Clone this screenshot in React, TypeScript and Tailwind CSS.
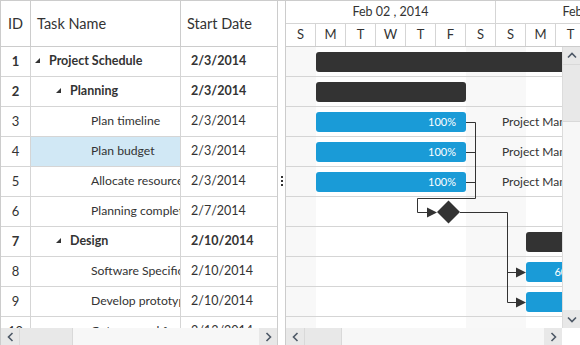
import React from 'react';

type Row = { id: number; name: string; date: string; level: number; parent?: boolean };

const rows: Row[] = [
  { id: 1, name: 'Project Schedule', date: '2/3/2014', level: 0, parent: true },
  { id: 2, name: 'Planning', date: '2/3/2014', level: 1, parent: true },
  { id: 3, name: 'Plan timeline', date: '2/3/2014', level: 2 },
  { id: 4, name: 'Plan budget', date: '2/3/2014', level: 2 },
  { id: 5, name: 'Allocate resources', date: '2/3/2014', level: 2 },
  { id: 6, name: 'Planning complete', date: '2/7/2014', level: 2 },
  { id: 7, name: 'Design', date: '2/10/2014', level: 1, parent: true },
  { id: 8, name: 'Software Specification', date: '2/10/2014', level: 2 },
  { id: 9, name: 'Develop prototype', date: '2/10/2014', level: 2 },
  { id: 10, name: 'Get approval from customer', date: '2/13/2014', level: 2 },
];

const indent = ['pl-[4px]', 'pl-[25px]', 'pl-[46px]'];
const days = ['S', 'M', 'T', 'W', 'T', 'F', 'S', 'S', 'M', 'T'];

// small chevron used by the scrollbar buttons
const Chevron = ({ dir }: { dir: 'l' | 'r' | 'u' | 'd' }) => {
  const pts = { l: '5.5,1 1.5,5 5.5,9', r: '1.5,1 5.5,5 1.5,9', u: '1,5.5 5,1.5 9,5.5', d: '1,1.5 5,5.5 9,1.5' }[dir];
  const horiz = dir === 'l' || dir === 'r';
  return (
    <svg width={horiz ? 7 : 10} height={horiz ? 10 : 7} viewBox={horiz ? '0 0 7 10' : '0 0 10 7'}>
      <polyline points={pts} fill="none" stroke="#4d5866" strokeWidth="1.6" />
    </svg>
  );
};

const Expander = () => (
  <span className="w-[14px] shrink-0 flex items-center">
    <svg width="5" height="5" viewBox="0 0 5 5" className="mt-[-2px]">
      <polygon points="5,0 5,5 0,5" fill="#333" />
    </svg>
  </span>
);

const HScroll = ({ thumb }: { thumb: string }) => (
  <div className="h-[17px] flex bg-[#f7f7f7]">
    <div className="w-[19px] shrink-0 flex items-center justify-center bg-[#e8e8e8] border-r border-[#d9d9d9]">
      <Chevron dir="l" />
    </div>
    <div className={`${thumb} shrink-0 bg-[#e8e8e8] border-r border-[#d9d9d9]`} />
    <div className="flex-1" />
    <div className="w-[18px] shrink-0 flex items-center justify-center bg-[#e8e8e8]">
      <Chevron dir="r" />
    </div>
  </div>
);

const Bar = ({ pos, color, label }: { pos: string; color: string; label?: string }) => (
  <div className={`absolute top-[5px] h-[20px] rounded-[3px] ${pos} ${color} flex items-center justify-end pr-[10px] text-[11px] text-white`}>
    {label}
  </div>
);

const Arrow = ({ x, y }: { x: number; y: number }) => (
  <polygon points={`${x},${y - 5} ${x + 10},${y} ${x},${y + 5}`} fill="#333" />
);

const Gantt = () => (
  <div className="flex-1 flex flex-col min-w-0 border-l border-[#cccccc]">
    <div className="h-[46px] shrink-0 border-b border-[#cccccc] overflow-hidden text-[12.5px] text-[#333]">
      <div className="h-[23px] flex border-b border-[#d5d5d5]">
        <div className="w-[210px] shrink-0 border-r border-[#d5d5d5] flex items-center justify-center">Feb 02 , 2014</div>
        <div className="w-[210px] shrink-0 border-r border-[#d5d5d5] flex items-center justify-center">Feb 09 , 2014</div>
      </div>
      <div className="h-[22px] flex text-[13px]">
        {days.map((d, i) => (
          <div key={i} className="w-[30px] shrink-0 border-r border-[#d5d5d5] flex items-center justify-center">{d}</div>
        ))}
      </div>
    </div>

    <div className="flex-1 flex min-h-0">
      <div className="flex-1 relative overflow-hidden">
        <div className="absolute inset-0 flex">
          <div className="w-[30px] shrink-0 bg-[#f8f8f8]" />
          <div className="w-[150px] shrink-0 bg-white" />
          <div className="w-[60px] shrink-0 bg-[#f8f8f8]" />
          <div className="flex-1 bg-white" />
        </div>
        {rows.map((r) => (
          <div key={r.id} className="relative h-[30px] border-b border-[#d5d5d5] text-[12px] text-[#333]">
            {r.id === 1 && <Bar pos="left-[30px] w-[400px]" color="bg-[#333333]" />}
            {r.id === 2 && <Bar pos="left-[30px] w-[150px]" color="bg-[#333333]" />}
            {(r.id === 3 || r.id === 4 || r.id === 5) && (
              <>
                <Bar pos="left-[30px] w-[150px]" color="bg-[#1a9bd7]" label="100%" />
                <span className="absolute left-[216px] top-0 h-[29px] flex items-center whitespace-nowrap">Project Manager</span>
              </>
            )}
            {r.id === 7 && <Bar pos="left-[240px] w-[200px]" color="bg-[#333333]" />}
            {r.id === 8 && <Bar pos="left-[240px] w-[60px]" color="bg-[#1a9bd7]" label="60%" />}
            {r.id === 9 && <Bar pos="left-[240px] w-[90px]" color="bg-[#1a9bd7]" />}
          </div>
        ))}
        <svg className="absolute left-0 top-0 pointer-events-none" width="300" height="300">
          <g stroke="#333" strokeWidth="1" fill="none">
            <polyline points="180,75.5 189.5,75.5" />
            <polyline points="180,105.5 189.5,105.5" />
            <polyline points="180,135.5 189.5,135.5" />
            <polyline points="189.5,75.5 189.5,151.5 131.5,151.5 131.5,165.5 141,165.5" />
            <polyline points="174,165.5 221.5,165.5 221.5,255.5 230,255.5" />
            <polyline points="221.5,225.5 230,225.5" />
          </g>
          <Arrow x={141} y={165.5} />
          <polygon points="151,165 162.5,153.5 174,165 162.5,176.5" fill="#333" />
          <Arrow x={230} y={225.5} />
          <Arrow x={230} y={255.5} />
        </svg>
      </div>
      <div className="w-[18px] shrink-0 flex flex-col bg-[#f7f7f7] border-l border-[#dcdcdc]">
        <div className="h-[18px] shrink-0 flex items-center justify-center bg-[#e8e8e8] border-b border-[#d9d9d9]">
          <Chevron dir="u" />
        </div>
        <div className="h-[57px] shrink-0 bg-[#e8e8e8] border-b border-[#d9d9d9]" />
        <div className="flex-1" />
        <div className="h-[18px] shrink-0 flex items-center justify-center bg-[#e8e8e8]">
          <Chevron dir="d" />
        </div>
      </div>
    </div>

    <div className="h-[17px] shrink-0 flex">
      <div className="flex-1">
        <HScroll thumb="w-[37px]" />
      </div>
      <div className="w-[18px] shrink-0 bg-white" />
    </div>
  </div>
);

const App: React.FC = () => {
  return (
    <div className="w-[580px] h-[345px] overflow-hidden bg-white border-t border-l border-[#cccccc] flex font-['Lato',sans-serif] text-[#333]">
      {/* tree grid */}
      <div className="w-[277px] shrink-0 flex flex-col border-r border-[#cccccc]">
        <div className="h-[46px] shrink-0 flex border-b border-[#cccccc] text-[14.5px]">
          <div className="w-[30px] shrink-0 border-r border-[#cccccc] flex items-center pl-[7px]">ID</div>
          <div className="w-[150px] shrink-0 border-r border-[#cccccc] flex items-center pl-[6px]">Task Name</div>
          <div className="flex-1 flex items-center pl-[6px]">Start Date</div>
        </div>
        <div className="flex-1 overflow-hidden text-[12px]">
          {rows.map((r) => (
            <div key={r.id} className={`h-[30px] flex border-b border-[#d5d5d5] ${r.parent ? 'font-bold' : ''}`}>
              <div className="w-[30px] shrink-0 border-r border-[#d5d5d5] flex items-center justify-center text-[13px]">{r.id}</div>
              <div className={`w-[150px] shrink-0 border-r border-[#d5d5d5] flex items-center overflow-hidden whitespace-nowrap ${indent[r.level]} ${r.id === 4 ? 'bg-[#d1e8f5]' : ''} ${r.parent ? 'text-[12.5px]' : 'text-[12.2px]'}`}>
                {r.parent ? <Expander /> : <span className="w-[14px] shrink-0" />}
                <span className="mt-[-1px]">{r.name}</span>
              </div>
              <div className="flex-1 flex items-center pl-[10px] whitespace-nowrap text-[12.5px]">{r.date}</div>
            </div>
          ))}
        </div>
        <HScroll thumb="w-[53px]" />
      </div>

      {/* splitter */}
      <div className="w-[7px] shrink-0 flex items-center justify-center bg-white">
        <div className="flex flex-col gap-[2px] mt-[16px]">
          <span className="w-[2px] h-[2px] bg-[#333]" />
          <span className="w-[2px] h-[2px] bg-[#333]" />
          <span className="w-[2px] h-[2px] bg-[#333]" />
        </div>
      </div>

      <Gantt />
    </div>
  );
};

export default App;
